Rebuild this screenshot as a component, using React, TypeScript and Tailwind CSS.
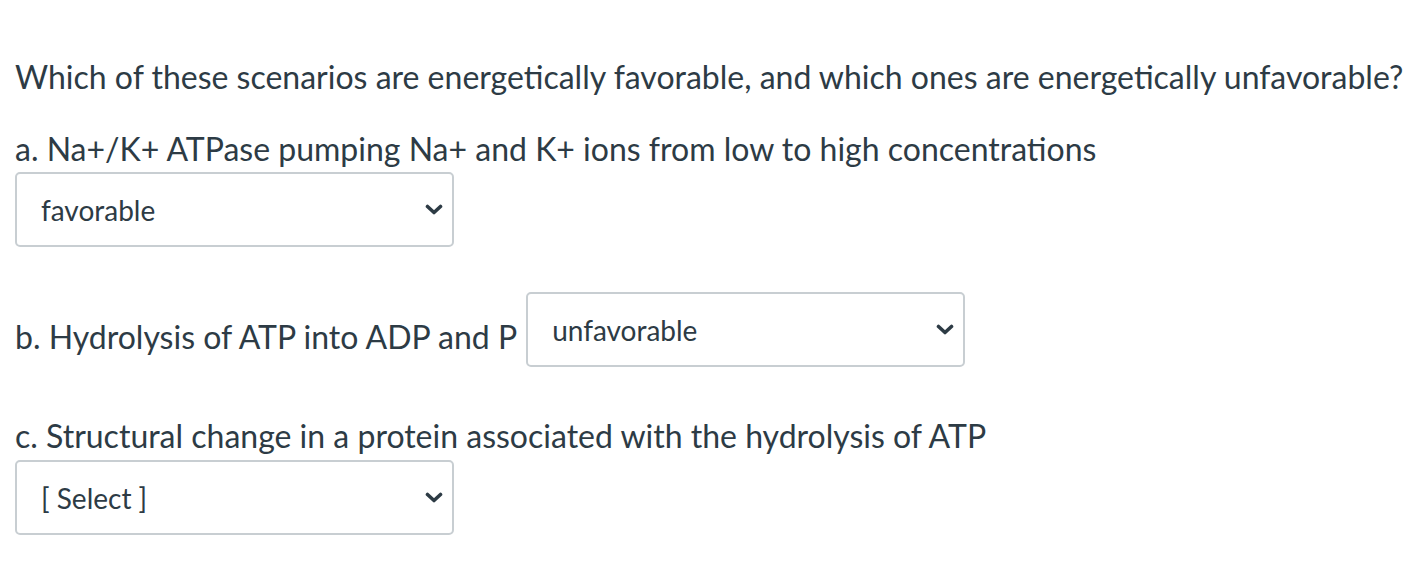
import React from "react";

function Chevron() {
  return (
    <svg width="18" height="12" viewBox="0 0 18 12" className="shrink-0">
      <path d="M2.5 2.5 L9 8.5 L15.5 2.5" fill="none" stroke="#2d3b45" strokeWidth="3.6" strokeLinecap="round" strokeLinejoin="round" />
    </svg>
  );
}

function SelectBox({ value }: { value: string }) {
  return (
    <div className="w-[439px] h-[75px] border-2 border-[#c8ced2] rounded-[5px] bg-white flex items-center justify-between pl-[24px] pr-[9px] box-border">
      <span className="text-[28px] leading-none">{value}</span>
      <Chevron />
    </div>
  );
}

export default function App() {
  return (
    <div
      className="w-[1414px] h-[586px] bg-white text-[#2d3b45] pl-[15px] overflow-hidden"
      style={{ fontFamily: "Lato, 'Noto Sans', sans-serif" }}
    >
      <div className="pt-[58px] text-[32px] leading-[38px] whitespace-nowrap">
        Which of these scenarios are energetically favorable, and which ones are energetically unfavorable?
      </div>
      <div className="mt-[34px] text-[32px] leading-[38px]">
        a. Na+/K+ ATPase pumping Na+ and K+ ions from low to high concentrations
      </div>
      <div className="mt-[4px]">
        <SelectBox value="favorable" />
      </div>
      <div className="mt-[45px] flex items-end">
        <span className="text-[32px] leading-[38px] mb-[11px] mr-[9px]">b. Hydrolysis of ATP into ADP and P</span>
        <SelectBox value="unfavorable" />
      </div>
      <div className="mt-[50px] text-[32px] leading-[38px]">
        c. Structural change in a protein associated with the hydrolysis of ATP
      </div>
      <div className="mt-[5px]">
        <SelectBox value="[ Select ]" />
      </div>
    </div>
  );
}
